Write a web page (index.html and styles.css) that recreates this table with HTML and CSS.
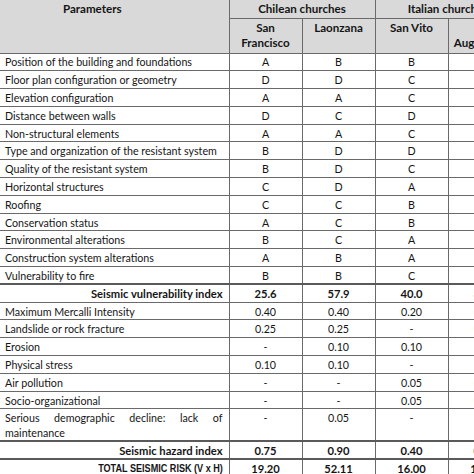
FILE: index.html
```html
<!DOCTYPE html>
<html lang="en">
<head>
<meta charset="utf-8">
<title>Seismic risk parameters</title>
<link rel="stylesheet" href="styles.css">
</head>
<body>
<table class="risk">
  <colgroup>
    <col class="c-param">
    <col class="c-val">
    <col class="c-val">
    <col class="c-val">
    <col class="c-val">
  </colgroup>
  <thead>
    <tr class="h1">
      <th rowspan="2" class="param-h">Parameters</th>
      <th colspan="2">Chilean churches</th>
      <th colspan="2">Italian churches</th>
    </tr>
    <tr class="h2">
      <th>San<br>Francisco</th>
      <th>Laonzana</th>
      <th>San Vito</th>
      <th>St.<br>Augustinian</th>
    </tr>
  </thead>
  <tbody>
    <tr><td class="p">Position of the building and foundations</td><td>A</td><td>B</td><td>B</td><td>B</td></tr>
    <tr><td class="p">Floor plan configuration or geometry</td><td>D</td><td>D</td><td>C</td><td>C</td></tr>
    <tr><td class="p">Elevation configuration</td><td>A</td><td>A</td><td>C</td><td>B</td></tr>
    <tr><td class="p">Distance between walls</td><td>D</td><td>C</td><td>D</td><td>C</td></tr>
    <tr><td class="p">Non-structural elements</td><td>A</td><td>A</td><td>C</td><td>B</td></tr>
    <tr><td class="p">Type and organization of the resistant system</td><td>B</td><td>D</td><td>D</td><td>C</td></tr>
    <tr><td class="p">Quality of the resistant system</td><td>B</td><td>D</td><td>C</td><td>C</td></tr>
    <tr><td class="p">Horizontal structures</td><td>C</td><td>D</td><td>A</td><td>B</td></tr>
    <tr><td class="p">Roofing</td><td>C</td><td>C</td><td>B</td><td>B</td></tr>
    <tr><td class="p">Conservation status</td><td>A</td><td>C</td><td>B</td><td>C</td></tr>
    <tr><td class="p">Environmental alterations</td><td>B</td><td>C</td><td>A</td><td>B</td></tr>
    <tr><td class="p">Construction system alterations</td><td>A</td><td>B</td><td>A</td><td>B</td></tr>
    <tr class="before-thick"><td class="p">Vulnerability to fire</td><td>B</td><td>B</td><td>C</td><td>C</td></tr>
    <tr class="idx"><td class="p">Seismic vulnerability index</td><td>25.6</td><td>57.9</td><td>40.0</td><td>33.6</td></tr>
    <tr><td class="p">Maximum Mercalli Intensity</td><td>0.40</td><td>0.40</td><td>0.20</td><td>0.20</td></tr>
    <tr><td class="p">Landslide or rock fracture</td><td>0.25</td><td>0.25</td><td>-</td><td>0.25</td></tr>
    <tr><td class="p">Erosion</td><td>-</td><td>0.10</td><td>0.10</td><td>-</td></tr>
    <tr><td class="p">Physical stress</td><td>0.10</td><td>0.10</td><td>-</td><td>-</td></tr>
    <tr><td class="p">Air pollution</td><td>-</td><td>-</td><td>0.05</td><td>0.05</td></tr>
    <tr><td class="p">Socio-organizational</td><td>-</td><td>-</td><td>0.05</td><td>0.05</td></tr>
    <tr class="tall before-thick"><td class="p just">Serious demographic decline: lack of maintenance</td><td>-</td><td>0.05</td><td>-</td><td>-</td></tr>
    <tr class="idx before-thick"><td class="p">Seismic hazard index</td><td>0.75</td><td>0.90</td><td>0.40</td><td>0.55</td></tr>
    <tr class="idx total"><td class="p"><span class="narrow">TOTAL SEISMIC RISK (V x H)</span></td><td>19.20</td><td>52.11</td><td>16.00</td><td>18.48</td></tr>
  </tbody>
</table>
</body>
</html>
```

FILE: styles.css
```css
html, body {
  margin: 0;
  padding: 0;
  background: #ffffff;
  overflow: hidden;
}

body {
  width: 474px;
  height: 474px;
}

.risk {
  border-collapse: collapse;
  table-layout: fixed;
  width: 520px;
  font-family: Lato, "Open Sans", sans-serif;
  font-size: 10.7px;
  color: #151515;
}

.c-param { width: 229px; }
.c-val { width: 73px; }

.risk th,
.risk td {
  border: 1px solid #6a6a6a;
  padding: 0 4px;
  line-height: 13px;
  vertical-align: middle;
  text-align: center;
}

.risk th {
  background: #d9d9d9;
  font-weight: 700;
  font-size: 11.6px;
}

.risk tr > :first-child {
  border-left: none;
}

.h1 {
  height: 18px;
}

.h1 th {
  border-top: none;
  vertical-align: top;
  padding-top: 2px;
}

.h2 {
  height: 35px;
}

.h2 th {
  vertical-align: top;
  line-height: 15px;
  padding-top: 1px;
}

.risk .param-h {
  padding-left: 4px;
  padding-right: 48px;
}

.risk tbody tr {
  height: 17.8px;
}

.risk td.p {
  text-align: left;
  padding-left: 5px;
  padding-right: 6px;
}

.just {
  text-align: justify !important;
}

.risk .tall {
  height: 32px;
}

.tall td {
  vertical-align: top;
  padding-top: 1px;
  line-height: 15px;
}

.before-thick td {
  border-bottom: 2px solid #5a5a5a;
}

.idx td {
  font-weight: 700;
  font-size: 11.2px;
}

.idx td.p {
  text-align: right;
}

.narrow {
  display: inline-block;
  font-family: "Liberation Sans", Arial, sans-serif;
  font-size: 11.5px;
  transform: scaleX(0.79);
  transform-origin: right center;
  white-space: nowrap;
}
```
